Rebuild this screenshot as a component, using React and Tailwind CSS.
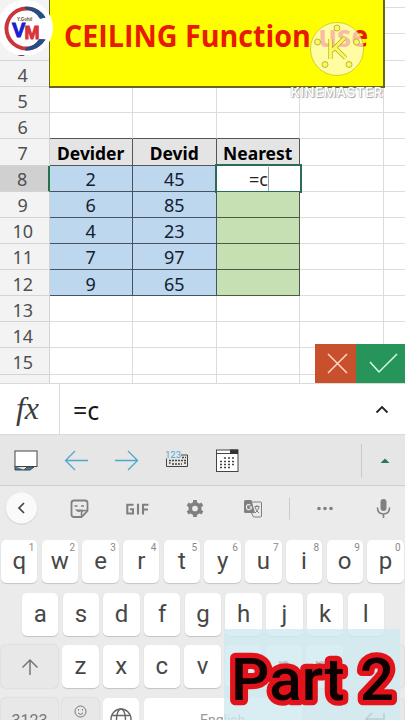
import React from 'react';

const rows = [
  { n: 4 },
  { n: 5 },
  { n: 6 },
  { n: 7, head: ['Devider', 'Devid', 'Nearest'] },
  { n: 8, data: [2, 45], active: true },
  { n: 9, data: [6, 85] },
  { n: 10, data: [4, 23] },
  { n: 11, data: [7, 97] },
  { n: 12, data: [9, 65] },
  { n: 13 },
  { n: 14 },
  { n: 15 },
];

const Cell = ({ className = '', children }) => (
  <div className={`w-[83.5px] shrink-0 border-r border-b flex items-center justify-center pt-[2px] ${className}`}>
    {children}
  </div>
);

const Row = ({ row }) => {
  const empty = 'border-[#dcdcdc]';
  const beforeTable = row.n === 6 ? 'border-r-[#dcdcdc] border-b-[#555]' : empty;
  let cells;
  if (row.head) {
    cells = row.head.map((h) => (
      <Cell key={h} className="bg-[#e4e4e4] border-[#555] font-bold text-black">
        <span className="scale-x-[.97]">{h}</span>
      </Cell>
    ));
  } else if (row.data) {
    cells = [
      <Cell key="a" className="bg-[#bdd7ee] border-[#46525e] text-[#14202e]">{row.data[0]}</Cell>,
      <Cell key="b" className="bg-[#bdd7ee] border-[#46525e] text-[#14202e]">{row.data[1]}</Cell>,
      <Cell key="c" className="bg-[#c6e0b4] border-[#4b5a42] relative">
        {row.active && (
          <div className="absolute -top-[2px] -left-[2px] w-[87px] h-[29px] border-2 border-[#2b6b57] bg-white flex items-center justify-center pt-px pl-[2px]">
            =c<span className="w-px h-[24px] bg-gray-400"></span>
          </div>
        )}
      </Cell>,
    ];
  } else {
    cells = [0, 1, 2].map((i) => <Cell key={i} className={beforeTable} />);
  }
  return (
    <div className="flex h-[26.13px] shrink-0">
      <div
        className={`w-[49.5px] shrink-0 border-b border-b-[#d4d4d4] pr-[3px] pt-[2px] flex items-center justify-center text-[#505050] ${
          row.active ? 'bg-[#d0d0d0] border-r-2 border-r-[#217346]' : 'bg-[#f3f3f3] border-r border-r-[#d4d4d4]'
        }`}
      >
        {row.n}
      </div>
      {cells}
      <Cell className={empty} />
      <Cell className={empty} />
    </div>
  );
};

const Key = ({ label, hint }) => (
  <div className="relative w-[36.4px] h-[43px] shrink-0 rounded-[5px] bg-white shadow-[0_1px_1px_#c4c4c4] flex items-center justify-center text-[24px] text-[#474747] pb-px">
    {label}
    {hint && <span className="absolute top-[1px] right-[3px] text-[10px] leading-[13px] text-[#8a8a8a]">{hint}</span>}
  </div>
);

const Logo = () => (
  <svg className="absolute -top-[2px] -left-[3px]" width="57" height="57" viewBox="-3 -2 57 57">
    <circle cx="25" cy="28" r="28" fill="#fff" />
    <path d="M45.500 17.500 A22 22 0 1 0 45.500 39.500 L41 39 A18 18 0 1 1 41 18 Z" fill="#c9353a" />
    <path d="M45.5 17.500 A22 22 0 0 0 24 7 L26 9.500 A18 18 0 0 1 40 19 Z" fill="#234f86" />
    <path d="M45.5 39.500 A22 22 0 0 1 25 50.500 L26 47.500 A18 18 0 0 0 39 39 Z" fill="#234f86" />
    <text x="12" y="37" fontSize="20" fontWeight="bold" fill="#1520d0" stroke="#1520d0" fontFamily="Liberation Sans, sans-serif">V</text>
    <text x="24.500" y="38.500" fontSize="18" fontWeight="bold" fill="#d8323a" stroke="#d8323a" fontFamily="Liberation Sans, sans-serif">M</text>
    <text x="17" y="21" fontSize="4.5" fontWeight="bold" fill="#55501c" fontFamily="Liberation Sans, sans-serif">Y.Gohil</text>
  </svg>
);

const KineMaster = () => (
  <div className="absolute left-[288px] top-[20px] w-[97px] flex flex-col items-center">
    <svg width="58" height="58" viewBox="0 0 58 58">
      <circle cx="29" cy="29" r="26.5" fill="#fffbe0" fillOpacity=".72" stroke="#b5b020" strokeWidth=".6" />
      <g fill="#fcf75a" stroke="#aaa52c" strokeWidth=".8">
        <circle cx="29" cy="8" r="3" />
        <circle cx="9.5" cy="22" r="3" />
        <circle cx="48.500" cy="22" r="3" />
        <circle cx="17" cy="44.500" r="3" />
        <circle cx="41" cy="44.500" r="3" />
      </g>
      <path d="M22.500 19v20M36.500 18L23.500 31M27.500 28l10 10" stroke="#aaa52c" strokeWidth="4.200" fill="none" />
      <path d="M22.500 19v20M36.500 18L23.500 31M27.500 28l10 10" stroke="#fcf75a" strokeWidth="3" fill="none" />
    </svg>
    <div className="mt-[7px] font-['Inter'] font-semibold text-[13.500px] leading-[15px] tracking-[.4px] text-white [text-shadow:0_0_1px_#888,1px_1px_1px_#aaa]">KINEMASTER</div>
  </div>
);

const Sheet = () => (
  <div className="relative h-[383px] overflow-hidden bg-white font-['Noto_Sans'] text-[18px] leading-[24px] text-[#222] flex flex-col">
    <div className="flex h-[61px] shrink-0">
      <div className="w-[49.5px] shrink-0 bg-[#f3f3f3] border-r border-b border-[#d4d4d4] flex items-end justify-center pr-1">
        <span className="-mb-[1px] text-[#505050]">3</span>
      </div>
      <div className="w-[335px] shrink-0"></div>
      <div className="grow flex flex-col">
        <div className="h-[8px] border-b border-[#dcdcdc]"></div>
        <div className="h-[26px] border-b border-[#dcdcdc]"></div>
        <div className="h-[27px] border-b border-[#dcdcdc]"></div>
      </div>
    </div>
    {rows.map((r) => <Row key={r.n} row={r} />)}
    <div className="flex h-[9px] shrink-0">
      <div className="w-[49.5px] shrink-0 bg-[#f3f3f3] border-r border-[#d4d4d4]"></div>
      {[0, 1, 2, 3].map((i) => <Cell key={i} className="border-[#dcdcdc]" />)}
    </div>

    {/* merged title cell */}
    <div className="absolute left-[49px] top-0 w-[336px] h-[88px] bg-[#ffff00] border-r-2 border-b-2 border-l border-[#66651a] pl-[14px] pt-[14px]">
      <div className="origin-left scale-x-[.955] whitespace-nowrap font-['Open_Sans'] font-bold text-[30px] leading-[44px] text-[#e81a00]">
        CEILING Function use
      </div>
    </div>
    <Logo />
    <KineMaster />

    {/* cancel / confirm */}
    <div className="absolute left-[315px] top-[344px] w-[90px] h-[39px] flex">
      <div className="w-[41px] bg-[#c8502c]">
        <svg width="41" height="39"><path d="M13 10l19 19M32 10L13 29" stroke="#ffd9c8" strokeWidth="1.500" fill="none" /></svg>
      </div>
      <div className="grow bg-[#27945a]">
        <svg width="49" height="39"><path d="M14 18l9 10L41 10" stroke="#d2ffe6" strokeWidth="1.500" fill="none" /></svg>
      </div>
    </div>
  </div>
);

const FormulaBar = () => (
  <div className="flex h-[52px] bg-white border-t border-b border-[#dadada]">
    <div className="w-[60px] border-r border-[#dcdcdc] flex items-center justify-center pb-[3px] pr-1 font-['Liberation_Serif'] italic text-[32px] text-[#3c3c3c]">fx</div>
    <div className="pl-[13px] pt-[3px] grow flex items-center font-['Noto_Sans'] text-[25px] text-[#161616]">=c</div>
    <svg width="46" height="50"><path d="M17.500 28.500l5.500-5.500 5.500 5.500" stroke="#222" strokeWidth="1.800" fill="none" /></svg>
  </div>
);

const ExcelTools = () => (
  <div className="h-[51px] bg-[#e6e6e6] border-b border-[#cfcfcf] flex">
    <svg width="405" height="50" fill="none">
      <rect x="15" y="16" width="22" height="15.500" fill="#fff" stroke="#444" />
      <path d="M15 31v4h9M24 35l3-3h7l-4 3z" stroke="#444" fill="#3f7fae" />
      <path d="M88 25.500H66M75 16l-9.500 9.500L75 35" stroke="#4da7cf" strokeWidth="1.300" />
      <path d="M115 25.500h22M128 16l9.500 9.500L128 35" stroke="#4da7cf" strokeWidth="1.300" />
      <text x="165" y="23" fontSize="9.500" fill="#4da7cf" fontFamily="Roboto, sans-serif">123</text>
      <path d="M181 20h6.500v11.500h-21v-8" stroke="#444" />
      <path d="M169 25.500h17M169 28h1.500M172 29h10M184 28h2M182 22.500h4" stroke="#444" strokeWidth="1.500" strokeDasharray="2 1" />
      <rect x="216.500" y="15" width="21.500" height="21.500" fill="#fff" stroke="#444" />
      <path d="M216.500 18.500H238" stroke="#444" />
      <rect x="230" y="14.500" width="8" height="4.500" fill="#333" />
      <path d="M224 23h12M220 26.500h16M220 29.500h16M220 32.500h12" stroke="#444" strokeWidth="1.700" strokeDasharray="2 2" />
      <path d="M361.500 9v34" stroke="#cacaca" />
      <path d="M380.500 28l4.500-4.500 4.500 4.500z" fill="#28785a" />
    </svg>
  </div>
);

const Suggestions = () => (
  <div className="h-[54px] shrink-0">
    <svg width="405" height="54" fill="none" stroke="#808080">
      <circle cx="21.500" cy="23" r="16" fill="#d9d9d9" stroke="none" />
      <circle cx="21.500" cy="22" r="15.500" fill="#fafafa" stroke="none" />
      <path d="M24 17l-5 5 5 5" stroke="#444" strokeWidth="1.700" />
      <path d="M74 14.500h11q2.500 0 2.500 2.500v8l-6 6h-7.500q-2.500 0-2.500-2.500V17q0-2.500 2.500-2.500z" strokeWidth="1.800" />
      <path d="M87 24.500h-3q-2.500 0-2.500 2.500v3M74.500 20h3M81 20h3" strokeWidth="1.500" />
      <path d="M75 23.500q4 5 8 0z" fill="#808080" stroke="none" />
      <path d="M133.500 18.700h-6.200v8.800h5.700v-4.300h-3M138 17.700v10.700M143 28.400v-9.700h5.500M143 23.500h5" strokeWidth="2.100" />
      <circle cx="195" cy="22.500" r="4.700" strokeWidth="3.700" />
      <path d="M195 14v3M195 28v3M187.600 18.200l2.600 1.500M199.800 25.300l2.600 1.500M187.600 26.800l2.600-1.500M199.800 19.700l2.600-1.500" strokeWidth="3.800" />
      <path d="M245.500 14h6l3.500 13h-9.500q-1.500 0-1.500-1.500v-10q0-1.500 1.500-1.500z" fill="#808080" stroke="none" />
      <path d="M252 16h8.500q1 0 1 1v13q0 1-1 1h-7l-2-4M254.500 20.500h5M257 19v1.500M255 21q1 4 4 6M259 21q-1 4-4 6" strokeWidth="1" />
      <path d="M250.500 19q-4-1.500-4 2t3 2.500q2 0 2-2.500h-2" stroke="#eee" strokeWidth="1.200" />
      <path d="M289.500 11.500v22" stroke="#ccc" />
      <g fill="#808080" stroke="none">
        <circle cx="319" cy="22.500" r="1.800" />
        <circle cx="325" cy="22.500" r="1.800" />
        <circle cx="331" cy="22.500" r="1.800" />
        <rect x="380.500" y="13" width="6" height="12" rx="3" />
      </g>
      <path d="M377.500 21.500q0 6.500 6 6.500t6-6.500M383.500 28v4" strokeWidth="1.600" />
    </svg>
  </div>
);

const sideKey = 'h-[43px] shrink-0 rounded-[5px] bg-[#e8e8e8] shadow-[0_0_2px_#c4c4c4] flex justify-center items-center';

const Keyboard = () => (
  <div className="relative h-[234px] overflow-hidden bg-[#ebebeb] font-['Roboto'] flex flex-col">
    <Suggestions />
    <div className="flex flex-col gap-[9.600px] pl-[1px]">
      <div className="flex gap-[4.300px]">
        {'qwertyuiop'.split('').map((k, i) => <Key key={k} label={k} hint={String((i + 1) % 10)} />)}
      </div>
      <div className="flex gap-[4.300px] pl-[21px]">
        {'asdfghjkl'.split('').map((k) => <Key key={k} label={k} />)}
      </div>
      <div className="flex gap-[4.300px]">
        <div className={`${sideKey} w-[57px]`}>
          <svg width="20" height="20" fill="none" stroke="#777" strokeWidth="1.500"><path d="M10 18V3M2.500 10.500L10 3l7.500 7.500" /></svg>
        </div>
        {'zxcvbnm'.split('').map((k) => <Key key={k} label={k} />)}
        <div className={`${sideKey} w-[57px]`}>
          <svg width="22" height="16" fill="none" stroke="#888" strokeWidth="1.500"><path d="M7 2h13v12H7L1 8zM10 5l6 6M16 5l-6 6" /></svg>
        </div>
      </div>
      <div className="flex gap-[4.300px]">
        <div className={`${sideKey} w-[57px] pt-[3px] text-[16px] text-[#777]`}>3123</div>
        <div className={`${sideKey} w-[36.400px]`}>
          <svg className="mb-[16px]" width="13" height="13" fill="none" stroke="#777">
            <circle cx="6.500" cy="6.500" r="5.500" />
            <path d="M4 8q2.500 3 5 0M4.500 4v1.500M8.500 4v1.500" />
          </svg>
        </div>
        <div className="w-[36.400px] h-[43px] shrink-0 rounded-[5px] bg-white flex items-center justify-center">
          <svg width="22" height="22" fill="none" stroke="#666" strokeWidth="1.400">
            <circle cx="11" cy="11" r="10" />
            <ellipse cx="11" cy="11" rx="4.500" ry="10" />
            <path d="M2 7.500h18M2 14.500h18" />
          </svg>
        </div>
        <div className="w-[158px] h-[43px] shrink-0 rounded-[5px] bg-white flex items-center justify-center pt-[3px] text-[14px] text-[#999]">English</div>
        <div className={`${sideKey} w-[36.400px]`}></div>
        <div className={`${sideKey} w-[57px]`}>
          <svg width="22" height="14" fill="none" stroke="#666" strokeWidth="1.600"><path d="M20 1v6H3M8 1L2 7l6 6" /></svg>
        </div>
      </div>
    </div>

    {/* caption sticker over the keys */}
    <div className="absolute left-[224px] top-[143px] w-[176px] h-[91px] bg-[#cfeaf0]/80"></div>
    <svg className="absolute left-[224px] top-[143px]" width="181" height="91">
      <text x="7" y="71" fontSize="60" textLength="163" lengthAdjust="spacingAndGlyphs" fontFamily="Roboto, sans-serif" fontWeight="500" fill="#0c0000" stroke="#e3131b" strokeWidth="10.500" strokeLinejoin="round" paintOrder="stroke">Part 2</text>
    </svg>
  </div>
);

export default function App() {
  return (
    <div className="w-[405px] h-[720px] overflow-hidden bg-[#ebebeb]">
      <Sheet />
      <FormulaBar />
      <ExcelTools />
      <Keyboard />
    </div>
  );
}
